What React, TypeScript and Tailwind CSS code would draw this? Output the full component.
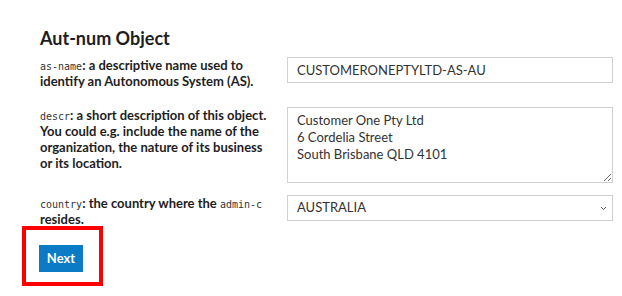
export default function App() {
  const code = "font-['DejaVu_Sans_Mono',monospace] font-normal text-[10px] leading-none text-[#333]"
  return (
    <div className="w-[622px] h-[296px] bg-white font-['Lato',sans-serif] text-[#1e1e1e] pl-10 pt-[26px]">
      <h2 className="text-[18px] font-bold leading-[24px] mb-[7px]">Aut-num Object</h2>

      <div className="flex mb-[18px]">
        <p className="w-[247px] text-[13px] font-bold leading-[16px] pr-[20px]">
          <span className={code}>as-name</span>: a descriptive name used to identify an Autonomous System (AS).
        </p>
        <input
          className="w-[326px] h-[26px] border border-[#d0d0d0] px-[9px] text-[13px] text-[#333] outline-none"
          defaultValue="CUSTOMERONEPTYLTD-AS-AU"
        />
      </div>

      <div className="flex mb-[12px]">
        <p className="w-[247px] text-[13px] font-bold leading-[16px] pr-[20px]">
          <span className={code}>descr</span>: a short description of this object. You could e.g. include the name of the organization, the nature of its business or its location.
        </p>
        <textarea
          className="w-[326px] h-[76px] border border-[#d0d0d0] px-[9px] py-[4px] text-[13px] leading-[17px] text-[#333] outline-none"
          defaultValue={"Customer One Pty Ltd\n6 Cordelia Street\nSouth Brisbane QLD 4101"}
        />
      </div>

      <div className="flex">
        <p className="w-[247px] text-[13px] font-bold leading-[16px] pr-[20px]">
          <span className={code}>country</span>: the country where the <span className={code}>admin-c</span> resides.
        </p>
        <div className="relative w-[326px] h-[26px] border border-[#d0d0d0] flex items-center px-[9px] text-[13px] text-[#333]">
          AUSTRALIA
          <svg className="absolute right-[5px] top-[10px]" width="7" height="5" viewBox="0 0 7 5">
            <path d="M1 1l2.5 2.5L6 1" fill="none" stroke="#555" strokeWidth="1" />
          </svg>
        </div>
      </div>

      <div className="-ml-[18px] -mt-[1px] w-[81px] h-[60px] border-4 border-[#ff0000] pl-[13px] pt-[15px]">
        <button className="w-[44px] h-[27px] bg-[#0a7bc4] text-white text-[13px] font-bold">Next</button>
      </div>
    </div>
  )
}
